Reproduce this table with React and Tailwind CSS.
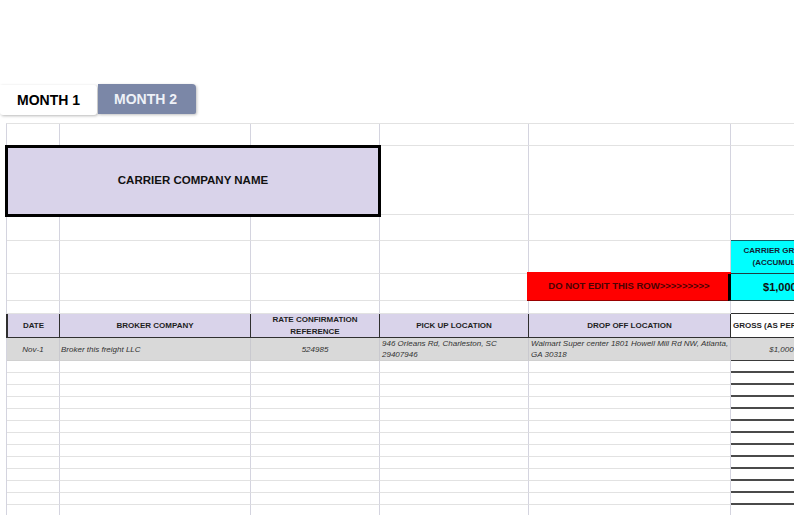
import React from "react";

const GRID = "grid grid-cols-[53px_191px_129px_149px_202px_110px]";
const C = "border-r border-b border-r-[#d4d4df] border-b-[#e2e2e2]";

function EmptyRow({ h }) {
  return (
    <div className={GRID}>
      {[0, 1, 2, 3, 4, 5].map((i) => (
        <div key={i} className={`${C} ${h}`} />
      ))}
    </div>
  );
}

export default function App() {
  const rest = Array.from({ length: 13 });
  return (
    <div className="w-[794px] h-[515px] overflow-hidden bg-white font-['Liberation_Sans',Arial,sans-serif] text-[#222]">
      {/* Tabs */}
      <div className="flex pt-[85px]">
        <div className="h-[30px] w-[97px] bg-white rounded-r-[3px] rounded-bl-[3px] shadow-[1px_1px_3px_rgba(0,0,0,0.28)] flex items-center pl-[17px] text-[14px] font-bold text-black">
          MONTH 1
        </div>
        <div className="h-[30px] w-[98px] -mt-[1px] ml-[1px] bg-[#7b87a7] rounded-tr-[4px] rounded-br-[2px] shadow-[1px_1px_3px_rgba(0,0,0,0.25)] flex items-center pl-[16px] text-[14px] font-bold text-[#eef1f7]">
          MONTH 2
        </div>
      </div>

      {/* Sheet */}
      <div className="mt-[8px] ml-[6px] border-l border-t border-l-[#d4d4df] border-t-[#e2e2e2] w-[845px]">
        {/* row 1 */}
        <EmptyRow h="h-[22px]" />

        {/* row 2 with merged box */}
        <div className={GRID}>
          <div className="col-span-3 h-[72px] -ml-[2px] -mr-[1px] -mt-[1px] -mb-[2px] border-[3px] border-black bg-[#d9d3ea] flex items-center justify-center text-[11.5px] font-bold text-[#111] relative z-10">
            CARRIER COMPANY NAME
          </div>
          <div className={`${C} h-[69px]`} />
          <div className={`${C} h-[69px]`} />
          <div className={`${C} h-[69px]`} />
        </div>

        {/* row 3 */}
        <EmptyRow h="h-[26px]" />

        {/* row 4 */}
        <div className={GRID}>
          <div className={`${C} h-[33px]`} />
          <div className={`${C} h-[33px]`} />
          <div className={`${C} h-[33px]`} />
          <div className={`${C} h-[33px]`} />
          <div className={`${C} h-[33px]`} />
          <div className="h-[34px] -mt-[1px] border-t border-b border-t-[#0f5f66] border-b-[#1f3f42] bg-[#00ffff] flex flex-col items-center justify-center text-[8px] leading-[12px] font-bold text-[#123] whitespace-nowrap">
            <span>CARRIER GROSS PAY</span>
            <span>(ACCUMULATED)</span>
          </div>
        </div>

        {/* row 5 */}
        <div className={GRID}>
          <div className={`${C} h-[27px]`} />
          <div className={`${C} h-[27px]`} />
          <div className={`${C} h-[27px]`} />
          <div className={`${C} h-[27px]`} />
          <div className="h-[29px] -mt-[2px] -ml-[2px] bg-[#ff0000] border-b border-b-[#9a0000] flex items-center justify-center text-[9.5px] font-bold text-[#4a0404] whitespace-nowrap">
            DO NOT EDIT THIS ROW&gt;&gt;&gt;&gt;&gt;&gt;&gt;&gt;&gt;
          </div>
          <div className="h-[27px] -ml-[3px] border-l-[3px] border-l-black border-b border-b-[#2a3a3a] bg-[#00ffff] flex items-center justify-center text-[11px] font-bold text-[#111] pl-[3px] whitespace-nowrap">
            $1,000.00
          </div>
        </div>

        {/* row 6 */}
        <EmptyRow h="h-[13px]" />

        {/* header row */}
        <div className={GRID}>
          {[
            ["DATE"],
            ["BROKER COMPANY"],
            ["RATE CONFIRMATION", "REFERENCE"],
            ["PICK UP LOCATION"],
            ["DROP OFF LOCATION"],
          ].map((lines, i) => (
            <div
              key={i}
              className={`h-[24px] bg-[#d9d3ea] border-r border-b border-r-[#2f2f2f] border-b-[#2f2f2f] flex flex-col items-center justify-center text-[8px] leading-[12px] font-bold text-[#1e1e1e] whitespace-nowrap ${
                i === 0 ? "-ml-[1px] border-l-2 border-l-[#2f2f2f]" : ""
              }`}
            >
              {lines.map((l) => (
                <span key={l}>{l}</span>
              ))}
            </div>
          ))}
          <div className="h-[25px] -mt-[1px] bg-white border-t border-b border-t-[#2f2f2f] border-b-[#2f2f2f] flex items-center pl-[2px] text-[8px] font-bold text-[#1e1e1e] whitespace-nowrap overflow-hidden">
            GROSS (AS PER RATE CON)
          </div>
        </div>

        {/* data row */}
        <div className={`${GRID} text-[8px] italic text-[#333] leading-[11px]`}>
          <div className="h-[23px] bg-[#d9d9d9] border-r border-b border-r-[#c9c9cf] border-b-[#d0d0d0] flex items-center justify-center">
            Nov-1
          </div>
          <div className="h-[23px] bg-[#d9d9d9] border-r border-b border-r-[#c9c9cf] border-b-[#d0d0d0] flex items-center pl-[1px] whitespace-nowrap">
            Broker this freight LLC
          </div>
          <div className="h-[23px] bg-[#d9d9d9] border-r border-b border-r-[#c9c9cf] border-b-[#d0d0d0] flex items-center justify-center">
            524985
          </div>
          <div className="h-[23px] bg-[#d9d9d9] border-r border-b border-r-[#c9c9cf] border-b-[#d0d0d0] pl-[2px] pt-[0px] whitespace-nowrap overflow-hidden">
            946 Orleans Rd, Charleston, SC
            <br />
            29407946
          </div>
          <div className="h-[23px] bg-[#d9d9d9] border-r border-b border-r-[#c9c9cf] border-b-[#d0d0d0] pl-[2px] pt-[0px] whitespace-nowrap overflow-hidden">
            Walmart Super center 1801 Howell Mill Rd NW, Atlanta,
            <br />
            GA 30318
          </div>
          <div className="h-[23px] bg-[#d9d9d9] border-b border-b-[#3a3a3a] flex items-center justify-center pl-[2px]">
            $1,000.00
          </div>
        </div>

        {/* remaining empty rows */}
        {rest.map((_, r) => (
          <div key={r} className={GRID}>
            {[0, 1, 2, 3, 4].map((i) => (
              <div key={i} className={`${C} h-[12px]`} />
            ))}
            <div className="h-[12px] border-b-2 border-b-[#4a4a4a]" />
          </div>
        ))}
      </div>
    </div>
  );
}
